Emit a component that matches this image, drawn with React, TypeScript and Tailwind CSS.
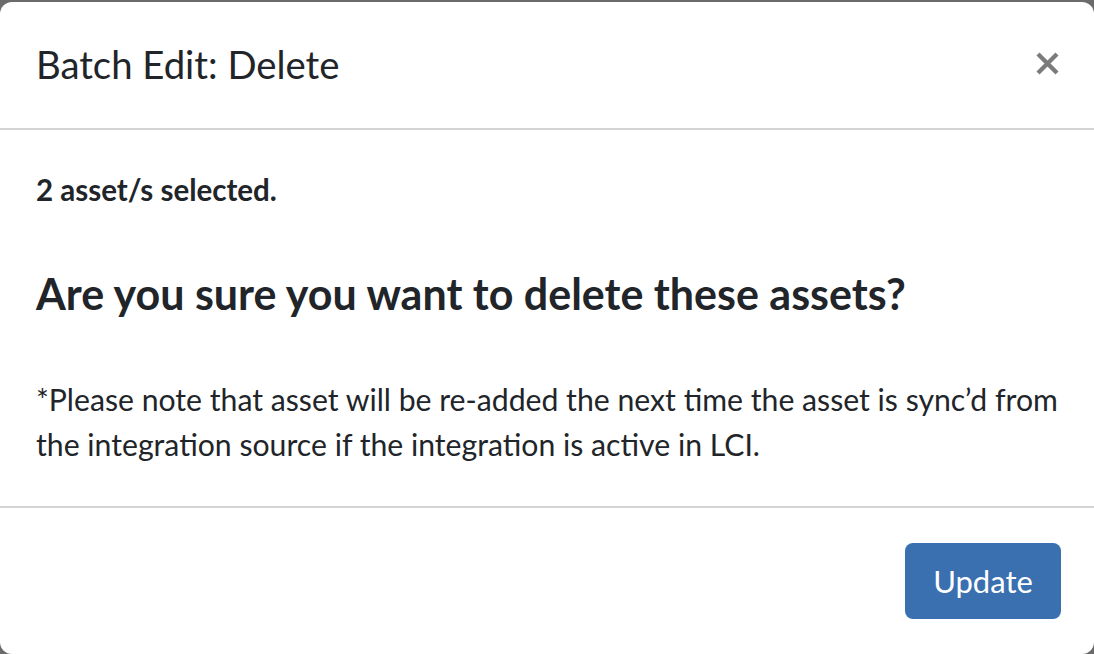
import React from "react";

export default function App() {
  return (
    <div
      className="w-[1094px] h-[654px] bg-[#6b6b6b] overflow-hidden"
      style={{ fontFamily: "Lato, 'Open Sans', sans-serif" }}
    >
      <div className="mt-[2px] w-[1094px] h-[652px] bg-white rounded-[12px] flex flex-col text-[#212529]">
        <div className="h-[128px] shrink-0 flex items-center justify-between pl-[36px] pr-[35px] border-b-2 border-[#d4d4d4]">
          <h5 className="text-[38.3px] leading-[1.2] font-normal">Batch Edit: Delete</h5>
          <button className="w-[24px] h-[24px] flex items-center justify-center mb-[4px]">
            <svg width="23" height="23" viewBox="0 0 23 23">
              <path d="M2 2 L21 21 M21 2 L2 21" stroke="#7b7b7b" strokeWidth="4.3" strokeLinecap="butt" />
            </svg>
          </button>
        </div>
        <div className="px-[36px] pt-[37px] pb-[39px] flex flex-col shrink-0">
          <p className="text-[29.5px] leading-[45px] font-bold">2 asset/s selected.</p>
          <h3 className="mt-[56px] text-[43px] leading-[52px] font-bold">Are you sure you want to delete these assets?</h3>
          <p className="mt-[57px] text-[30.2px] leading-[45px]">
            *Please note that asset will be re-added the next time the asset is sync’d from the integration source if the integration is active in LCI.
          </p>
        </div>
        <div className="flex-1 border-t-2 border-[#d4d4d4] flex items-center justify-end pr-[33px]">
          <button className="w-[156px] h-[76px] rounded-[8px] bg-[#3a6fb0] text-white text-[31px] leading-none">
            Update
          </button>
        </div>
      </div>
    </div>
  );
}
